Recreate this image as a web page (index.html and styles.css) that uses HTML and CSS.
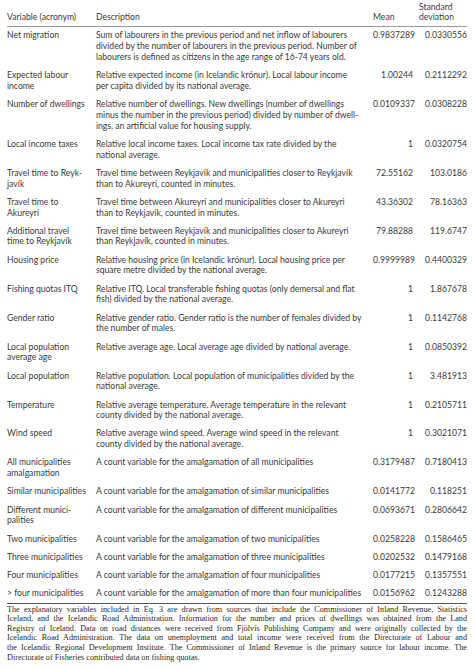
FILE: index.html
```html
<!DOCTYPE html>
<html>
<head>
<meta charset="utf-8">
<link rel="stylesheet" href="styles.css">
</head>
<body>
<div class="page">
<table class="stats">
  <colgroup>
    <col class="c-var"><col class="c-desc"><col class="c-mean"><col class="c-sd">
  </colgroup>
  <thead>
    <tr>
      <th class="h-var">Variable (acronym)</th>
      <th class="h-desc">Description</th>
      <th class="h-mean">Mean</th>
      <th class="h-sd">Standard<br>deviation</th>
    </tr>
  </thead>
  <tbody>
    <tr><td>Net migration</td><td>Sum of labourers in the previous period and net inflow of labourers<br>divided by the number of labourers in the previous period. Number of<br>labourers is defined as citizens in the age range of 16-74 years old.</td><td class="num">0.9837289</td><td class="num">0.0330556</td></tr>
    <tr><td>Expected labour<br>income</td><td>Relative expected income (in Icelandic krónur). Local labour income<br>per capita divided by its national average.</td><td class="num">1.00244</td><td class="num">0.2112292</td></tr>
    <tr><td>Number of dwellings</td><td>Relative number of dwellings. New dwellings (number of dwellings<br>minus the number in the previous period) divided by number of dwell-<br>ings, an artificial value for housing supply.</td><td class="num">0.0109337</td><td class="num">0.0308228</td></tr>
    <tr><td>Local income taxes</td><td>Relative local income taxes. Local income tax rate divided by the<br>national average.</td><td class="num">1</td><td class="num">0.0320754</td></tr>
    <tr><td>Travel time to Reyk-<br>javík</td><td>Travel time between Reykjavík and municipalities closer to Reykjavík<br>than to Akureyri, counted in minutes.</td><td class="num">72.55162</td><td class="num">103.0186</td></tr>
    <tr><td>Travel time to<br>Akureyri</td><td>Travel time between Akureyri and municipalities closer to Akureyri<br>than to Reykjavík, counted in minutes.</td><td class="num">43.36302</td><td class="num">78.16363</td></tr>
    <tr><td>Additional travel<br>time to Reykjavík</td><td>Travel time between Reykjavík and municipalities closer to Akureyri<br>than Reykjavík, counted in minutes.</td><td class="num">79.88288</td><td class="num">119.6747</td></tr>
    <tr><td>Housing price</td><td>Relative housing price (in Icelandic krónur). Local housing price per<br>square metre divided by the national average.</td><td class="num">0.9999989</td><td class="num">0.4400329</td></tr>
    <tr><td>Fishing quotas ITQ</td><td>Relative ITQ. Local transferable fishing quotas (only demersal and flat<br>fish) divided by the national average.</td><td class="num">1</td><td class="num">1.867678</td></tr>
    <tr><td>Gender ratio</td><td>Relative gender ratio. Gender ratio is the number of females divided by<br>the number of males.</td><td class="num">1</td><td class="num">0.1142768</td></tr>
    <tr><td>Local population<br>average age</td><td>Relative average age. Local average age divided by national average.</td><td class="num">1</td><td class="num">0.0850392</td></tr>
    <tr><td>Local population</td><td>Relative population. Local population of municipalities divided by the<br>national average.</td><td class="num">1</td><td class="num">3.481913</td></tr>
    <tr><td>Temperature</td><td>Relative average temperature. Average temperature in the relevant<br>county divided by the national average.</td><td class="num">1</td><td class="num">0.2105711</td></tr>
    <tr><td>Wind speed</td><td>Relative average wind speed. Average wind speed in the relevant<br>county divided by the national average.</td><td class="num">1</td><td class="num">0.3021071</td></tr>
    <tr><td>All municipalities<br>amalgamation</td><td>A count variable for the amalgamation of all municipalities</td><td class="num">0.3179487</td><td class="num">0.7180413</td></tr>
    <tr><td>Similar municipalities</td><td>A count variable for the amalgamation of similar municipalities</td><td class="num">0.0141772</td><td class="num">0.118251</td></tr>
    <tr><td>Different munici-<br>palities</td><td>A count variable for the amalgamation of different municipalities</td><td class="num">0.0693671</td><td class="num">0.2806642</td></tr>
    <tr><td>Two municipalities</td><td>A count variable for the amalgamation of two municipalities</td><td class="num">0.0258228</td><td class="num">0.1586465</td></tr>
    <tr><td>Three municipalities</td><td>A count variable for the amalgamation of three municipalities</td><td class="num">0.0202532</td><td class="num">0.1479168</td></tr>
    <tr><td>Four municipalities</td><td>A count variable for the amalgamation of four municipalities</td><td class="num">0.0177215</td><td class="num">0.1357551</td></tr>
    <tr><td>&gt; four municipalities</td><td>A count variable for the amalgamation of more than four municipalities</td><td class="num">0.0156962</td><td class="num">0.1243288</td></tr>
  </tbody>
</table>
<div class="note">
  <div class="ln">The explanatory variables included in Eq. 3 are drawn from sources that include the Commissioner of Inland Revenue, Statistics</div>
  <div class="ln">Iceland, and the Icelandic Road Administration. Information for the number and prices of dwellings was obtained from the Land</div>
  <div class="ln">Registry of Iceland. Data on road distances were received from Fjölvís Publishing Company and were originally collected by the</div>
  <div class="ln">Icelandic Road Administration. The data on unemployment and total income were received from the Directorate of Labour and</div>
  <div class="ln">the Icelandic Regional Development Institute. The Commissioner of Inland Revenue is the primary source for labour income. The</div>
  <div class="ln last">Directorate of Fisheries contributed data on fishing quotas.</div>
</div>
</div>
</body>
</html>
```

FILE: styles.css
```css
html, body {
  margin: 0;
  padding: 0;
  background: #ffffff;
}
.page {
  padding: 0 7px;
  width: 460px;
}
.stats {
  border-collapse: collapse;
  width: 460px;
  table-layout: fixed;
  font-family: Lato, "Open Sans", sans-serif;
  font-size: 8.6px;
  line-height: 10.8px;
  color: #3a3a3a;
}
.c-var { width: 89px; }
.c-desc { width: 277px; }
.c-mean { width: 40px; }
.c-sd { width: 54px; }
.stats th {
  font-weight: normal;
  text-align: left;
  vertical-align: bottom;
  padding: 1.5px 0 2.5px 0;
  border-bottom: 1px solid #9a9a9a;
  white-space: nowrap;
}
.stats th.h-sd { padding-left: 6px; }
.stats td {
  vertical-align: top;
  padding: 3.7px 0;
  white-space: nowrap;
}
.stats td.num { text-align: right; }
.stats tbody tr:last-child td {
  border-bottom: 1.5px solid #555555;
}
.note {
  font-family: "Liberation Serif", "Times New Roman", serif;
  font-size: 8.2px;
  line-height: 9.6px;
  color: #2a2a2a;
  padding-top: 1px;
}
.note .ln {
  text-align: justify;
  text-align-last: justify;
}
.note .ln.last {
  text-align-last: left;
}
```
